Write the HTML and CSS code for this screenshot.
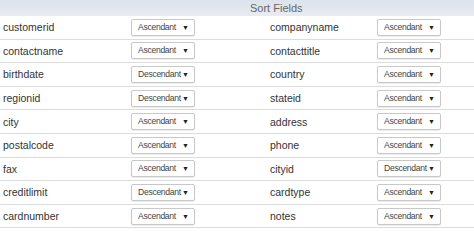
FILE: index.html
```html
<!DOCTYPE html>
<html lang="en">
<head>
    <meta charset="UTF-8">
    <title>Sort Fields</title>
    <link rel="stylesheet" href="styles.css">
</head>
<body>
    <div class="sort-panel">
        <div class="sort-header">Sort Fields</div>
        <div class="sort-row">
            <span class="field-name">customerid</span>
            <div class="cell"><span class="order-select">Ascendant<i>▼</i></span></div>
            <span class="field-name second">companyname</span>
            <div class="cell"><span class="order-select">Ascendant<i>▼</i></span></div>
        </div>
        <div class="sort-row">
            <span class="field-name">contactname</span>
            <div class="cell"><span class="order-select">Ascendant<i>▼</i></span></div>
            <span class="field-name second">contacttitle</span>
            <div class="cell"><span class="order-select">Ascendant<i>▼</i></span></div>
        </div>
        <div class="sort-row">
            <span class="field-name">birthdate</span>
            <div class="cell"><span class="order-select">Descendant<i>▼</i></span></div>
            <span class="field-name second">country</span>
            <div class="cell"><span class="order-select">Ascendant<i>▼</i></span></div>
        </div>
        <div class="sort-row">
            <span class="field-name">regionid</span>
            <div class="cell"><span class="order-select">Descendant<i>▼</i></span></div>
            <span class="field-name second">stateid</span>
            <div class="cell"><span class="order-select">Ascendant<i>▼</i></span></div>
        </div>
        <div class="sort-row">
            <span class="field-name">city</span>
            <div class="cell"><span class="order-select">Ascendant<i>▼</i></span></div>
            <span class="field-name second">address</span>
            <div class="cell"><span class="order-select">Ascendant<i>▼</i></span></div>
        </div>
        <div class="sort-row">
            <span class="field-name">postalcode</span>
            <div class="cell"><span class="order-select">Ascendant<i>▼</i></span></div>
            <span class="field-name second">phone</span>
            <div class="cell"><span class="order-select">Ascendant<i>▼</i></span></div>
        </div>
        <div class="sort-row">
            <span class="field-name">fax</span>
            <div class="cell"><span class="order-select">Ascendant<i>▼</i></span></div>
            <span class="field-name second">cityid</span>
            <div class="cell"><span class="order-select">Descendant<i>▼</i></span></div>
        </div>
        <div class="sort-row">
            <span class="field-name">creditlimit</span>
            <div class="cell"><span class="order-select">Descendant<i>▼</i></span></div>
            <span class="field-name second">cardtype</span>
            <div class="cell"><span class="order-select">Ascendant<i>▼</i></span></div>
        </div>
        <div class="sort-row">
            <span class="field-name">cardnumber</span>
            <div class="cell"><span class="order-select">Ascendant<i>▼</i></span></div>
            <span class="field-name second">notes</span>
            <div class="cell"><span class="order-select">Ascendant<i>▼</i></span></div>
        </div>
    </div>
</body>
</html>
```

FILE: styles.css
```css
* {
    margin: 0;
    padding: 0;
    box-sizing: border-box;
}

body {
    font-family: 'Liberation Sans', Arial, sans-serif;
    background: #fff;
    color: #333;
}

.sort-panel {
    width: 474px;
}

.sort-header {
    height: 16px;
    line-height: 16px;
    background: linear-gradient(#dde3ec, #e8ecf2);
    color: #666;
    font-size: 11px;
    padding-left: 250px;
}

.sort-row {
    display: grid;
    grid-template-columns: 131px 139px 107px 1fr;
    align-items: center;
    height: 23.6px;
    border-bottom: 1px solid #dcdcdc;
}

.sort-row:first-of-type {
    height: 24px;
}

.field-name {
    font-size: 10.5px;
    color: #333;
    padding-left: 3px;
}

.field-name.second {
    padding-left: 0;
}

.cell {
    display: flex;
    align-items: center;
}

.order-select {
    position: relative;
    display: block;
    width: 64px;
    height: 17px;
    line-height: 15px;
    border: 1px solid #c8c8c8;
    border-radius: 2px;
    background: #fff;
    box-shadow: 0 1px 1px rgba(0, 0, 0, 0.08);
    font-size: 8.6px;
    letter-spacing: -0.3px;
    color: #444;
    padding-left: 6px;
}

.order-select i {
    position: absolute;
    right: 5px;
    top: 0;
    font-style: normal;
    font-size: 7px;
    letter-spacing: 0;
    color: #222;
}
```
